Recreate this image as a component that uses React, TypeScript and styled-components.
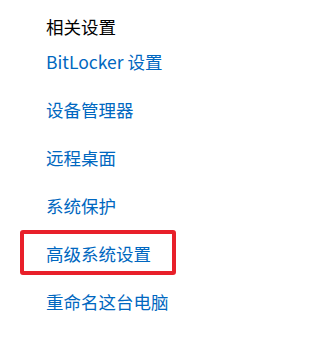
import React from "react";
import styled, { createGlobalStyle } from "styled-components";

const GlobalStyle = createGlobalStyle`
  html, body {
    margin: 0;
    padding: 0;
    background: #ffffff;
  }
  body {
    font-family: "Noto Sans CJK SC", "Noto Sans", sans-serif;
  }
`;

const Page = styled.div`
  width: 316px;
  height: 351px;
  background: #ffffff;
  padding-top: 14px;
  box-sizing: border-box;
`;

const Title = styled.div`
  margin-left: 46px;
  font-size: 17.5px;
  line-height: 26px;
  color: #000000;
`;

const List = styled.div`
  display: flex;
  flex-direction: column;
  gap: 3px;
  margin-top: -2px;
`;

const LinkItem = styled.a<{ $highlighted?: boolean }>`
  display: block;
  width: fit-content;
  box-sizing: border-box;
  height: 45px;
  margin-left: 20px;
  padding: 6px 21px 0 22px;
  border: 4px solid ${(p) => (p.$highlighted ? "#e8202a" : "transparent")};
  border-radius: 3px;
  font-size: 17.5px;
  line-height: 27px;
  color: #0067c0;
  text-decoration: none;
  cursor: pointer;
`;

const links = [
  "BitLocker 设置",
  "设备管理器",
  "远程桌面",
  "系统保护",
  "高级系统设置",
  "重命名这台电脑",
];

export default function App() {
  return (
    <Page>
      <GlobalStyle />
      <Title>相关设置</Title>
      <List>
        {links.map((l) => (
          <LinkItem key={l} $highlighted={l === "高级系统设置"}>
            {l}
          </LinkItem>
        ))}
      </List>
    </Page>
  );
}
